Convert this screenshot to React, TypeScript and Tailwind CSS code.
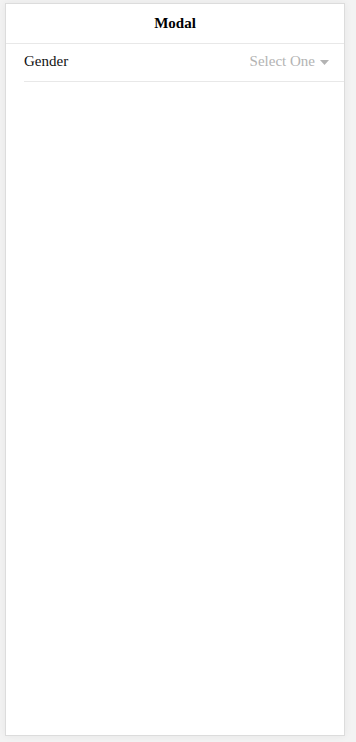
export default function App() {
  return (
    <div className="h-[742px] w-[356px] bg-[#f3f3f3] pl-[5px] pt-[3px] pr-[11px] pb-[6px] [font-family:'Liberation_Serif','Times_New_Roman',serif]">
      <div className="h-full bg-white border border-[#dcdcdc] shadow-[0_0_8px_rgba(0,0,0,0.06)]">
        <header className="h-[40px] flex items-center justify-center border-b border-[#e8e8e8]">
          <h1 className="text-[15px] font-bold text-black">Modal</h1>
        </header>
        <div className="pl-[18px]">
          <div className="h-[38px] pb-[2px] flex items-center justify-between pr-[15px] border-b border-[#e8e8e8]">
            <span className="text-[15px] text-[#111]">Gender</span>
            <button className="flex items-center gap-[5px] text-[15px] text-[#b3b3b3] [font-family:inherit]">
              Select One
              <svg width="9" height="5" viewBox="0 0 9 5" className="mt-[1px]">
                <path d="M0 0h9L4.5 5z" fill="#b3b3b3" />
              </svg>
            </button>
          </div>
        </div>
      </div>
    </div>
  )
}
